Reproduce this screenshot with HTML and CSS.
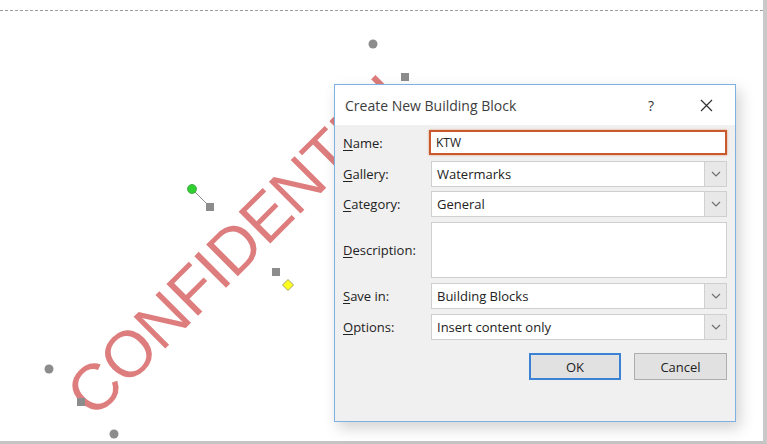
FILE: index.html
```html
<!DOCTYPE html>
<html>
<head>
<meta charset="utf-8">
<title>Create New Building Block</title>
<link rel="stylesheet" href="styles.css">
</head>
<body>
<div class="paper">
  <div class="margin-line"></div>
  <div class="watermark">CONFIDENTIAL</div>
  <svg class="handles" width="767" height="444" viewBox="0 0 767 444">
    <line x1="192" y1="189" x2="210" y2="207" stroke="#8a8a8a" stroke-width="1"/>
    <circle cx="373" cy="44" r="4.5" fill="#8c8c8c"/>
    <circle cx="49" cy="369" r="4.5" fill="#8c8c8c"/>
    <circle cx="114" cy="434" r="4.5" fill="#8c8c8c"/>
    <rect x="401" y="73" width="8" height="8" fill="#8c8c8c"/>
    <rect x="206" y="203" width="8" height="8" fill="#8c8c8c"/>
    <rect x="272" y="268" width="8" height="8" fill="#8c8c8c"/>
    <rect x="77" y="398" width="8" height="8" fill="#8c8c8c"/>
    <circle cx="192" cy="189" r="4.5" fill="#2fd12f" stroke="#3c9c3c" stroke-width="0.8"/>
    <polygon points="288,279.5 293.5,285 288,290.5 282.5,285" fill="#ffff1e" stroke="#8a8a60" stroke-width="0.8"/>
  </svg>

  <div class="dialog">
    <div class="titlebar">
      <span class="title">Create New Building Block</span>
      <span class="help">?</span>
      <svg class="close" width="13" height="13" viewBox="0 0 13 13">
        <path d="M1 1 L12 12 M12 1 L1 12" stroke="#333" stroke-width="1.2" fill="none"/>
      </svg>
    </div>
    <div class="body">
      <div class="form">
        <label class="lbl"><u>N</u>ame:</label>
        <div class="field name-field"><span>KTW</span></div>

        <label class="lbl"><u>G</u>allery:</label>
        <div class="field select"><span class="val">Watermarks</span><span class="drop"><svg width="10" height="6" viewBox="0 0 10 6"><path d="M1 1 L5 5 L9 1" stroke="#707070" stroke-width="1.2" fill="none"/></svg></span></div>

        <label class="lbl"><u>C</u>ategory:</label>
        <div class="field select"><span class="val">General</span><span class="drop"><svg width="10" height="6" viewBox="0 0 10 6"><path d="M1 1 L5 5 L9 1" stroke="#707070" stroke-width="1.2" fill="none"/></svg></span></div>

        <label class="lbl desc-lbl"><u>D</u>escription:</label>
        <div class="field textarea"></div>

        <label class="lbl"><u>S</u>ave in:</label>
        <div class="field select"><span class="val">Building Blocks</span><span class="drop"><svg width="10" height="6" viewBox="0 0 10 6"><path d="M1 1 L5 5 L9 1" stroke="#707070" stroke-width="1.2" fill="none"/></svg></span></div>

        <label class="lbl"><u>O</u>ptions:</label>
        <div class="field select"><span class="val">Insert content only</span><span class="drop"><svg width="10" height="6" viewBox="0 0 10 6"><path d="M1 1 L5 5 L9 1" stroke="#707070" stroke-width="1.2" fill="none"/></svg></span></div>
      </div>
      <div class="buttons">
        <div class="btn btn-ok">OK</div>
        <div class="btn">Cancel</div>
      </div>
    </div>
  </div>
</div>
</body>
</html>
```

FILE: styles.css
```css
* { box-sizing: border-box; }
html, body { margin: 0; padding: 0; background: #ffffff; }
body { width: 767px; height: 444px; overflow: hidden; font-family: "Open Sans", "Noto Sans", "Liberation Sans", sans-serif; }

.paper {
  position: relative;
  width: 767px;
  height: 444px;
  background: #ffffff;
  border-right: 4px solid #c9c9c9;
  border-bottom: 3px solid #c4c4c4;
}
.margin-line {
  position: absolute;
  left: 0;
  top: 10px;
  width: 763px;
  border-top: 1px dashed #9c9c9c;
}
.watermark {
  position: absolute;
  left: 243px;
  top: 239px;
  transform: translate(-50%, -50%) rotate(-45deg);
  font-family: "Liberation Sans", Arial, sans-serif;
  font-size: 65px;
  letter-spacing: -0.8px;
  line-height: 1;
  color: #de7d7d;
  white-space: nowrap;
}
.handles { position: absolute; left: 0; top: 0; }

.dialog {
  position: absolute;
  left: 334px;
  top: 84px;
  width: 402px;
  height: 338px;
  border: 1px solid #7eb0e2;
  background: #f0f0f0;
  box-shadow: 4px 6px 14px rgba(0, 0, 0, 0.18);
  display: flex;
  flex-direction: column;
}
.titlebar {
  height: 40px;
  background: #ffffff;
  display: flex;
  align-items: center;
  padding-left: 10px;
  padding-right: 22px;
}
.title { font-size: 14px; color: #3d3d3d; flex: 1; }
.help { font-size: 14px; color: #333; margin-right: 46px; }
.close { display: block; }

.body { padding: 5px 8px 0 8px; }
.form {
  display: grid;
  grid-template-columns: 88px 1fr;
  grid-template-rows: 25px 26px 26px 56px 26px 26px;
  row-gap: 5px;
  align-items: center;
}
.lbl { font-size: 13px; color: #222; white-space: nowrap; }
.lbl u { text-decoration-thickness: 1px; text-underline-offset: 2px; }
.field { height: 100%; background: #ffffff; border: 1px solid #cfcfcf; font-size: 13px; color: #222; display: flex; align-items: center; }
.name-field {
  border: 2px solid #c95a2e;
  box-shadow: 0 0 2px rgba(220, 110, 60, 0.7);
  padding-left: 5px;
  font-size: 12px;
  margin-left: -2px;
  margin-bottom: 1px;
}
.form .name-field + .lbl, .form .name-field + .lbl + .field { margin-top: 1px; }
.select .val { flex: 1; padding-left: 5px; }
.drop {
  width: 22px;
  height: 100%;
  background: #e8e8e8;
  border-left: 1px solid #d0d0d0;
  display: flex;
  align-items: center;
  justify-content: center;
}
.drop svg { display: block; }

.buttons {
  display: flex;
  justify-content: flex-end;
  gap: 13px;
  margin-top: 13px;
}
.btn {
  width: 93px;
  height: 27px;
  background: #e1e1e1;
  border: 1px solid #adadad;
  font-size: 13px;
  color: #222;
  display: flex;
  align-items: center;
  justify-content: center;
}
.btn-ok { border: 2px solid #3c82d4; width: 92px; }
```
